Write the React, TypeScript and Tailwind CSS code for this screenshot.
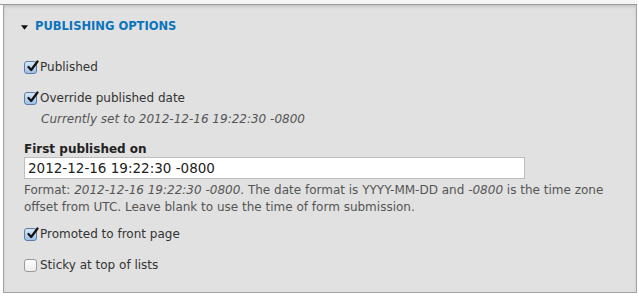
import React from 'react';

const font = { fontFamily: '"DejaVu Sans", Verdana, sans-serif' };

const Check = ({ checked }: { checked: boolean }) => (
  <span
    className={`relative inline-flex w-[13px] h-[13px] shrink-0 rounded-[3px] border ${
      checked ? 'border-[#5a7ea8] bg-gradient-to-b from-[#d6e6f7] to-[#9fc0e6]' : 'border-[#9a9a9a] bg-gradient-to-b from-white to-[#ececec]'
    }`}
  >
    {checked && (
      <svg viewBox="0 0 13 13" className="absolute left-[1px] -top-[2px] w-[13px] h-[13px]">
        <path d="M2.5 7 L5.2 10 L11.5 1.5" fill="none" stroke="#111" strokeWidth="2.2" strokeLinecap="round" strokeLinejoin="round" />
      </svg>
    )}
  </span>
);

const CheckRow = ({ label, checked }: { label: string; checked: boolean }) => (
  <label className="flex items-center gap-[3px] h-[16px] text-[12px] text-[#333]">
    <Check checked={checked} />
    <span>{label}</span>
  </label>
);

export default function App() {
  return (
    <div className="w-[639px] h-[296px] bg-white" style={font}>
      <div className="w-[637px] h-[5px] bg-[#f4f4f4] border-b border-[#9a9a9a]" />
      <div className="ml-[3px] w-[634px] h-[288px] bg-[#e1e1e1] border-l border-r border-b border-[#a3a3a3] shadow-[inset_0_2px_3px_rgba(0,0,0,0.12)] px-[20px] pt-[14px]">
        <div className="flex items-center gap-[7px] h-[16px] text-[11.5px] font-bold text-[#0a74bd]">
          <svg viewBox="0 0 8 5" className="w-[7px] h-[5px] ml-[-3px]">
            <path d="M0 0 L8 0 L4 5 Z" fill="#111" />
          </svg>
          <span>PUBLISHING OPTIONS</span>
        </div>

        <div className="mt-[24px] flex flex-col">
          <CheckRow label="Published" checked />
          <div className="mt-[15px]">
            <CheckRow label="Override published date" checked />
            <div className="ml-[17px] mt-[4px] text-[12px] italic text-[#555]">
              Currently set to 2012-12-16 19:22:30 -0800
            </div>
          </div>

          <div className="mt-[13px]">
            <div className="text-[12px] font-bold text-[#222] leading-[16px]">First published on</div>
            <div className="w-[501px] h-[22px] bg-white border border-[#bdbdbd] flex items-center px-[3px] text-[13.5px] text-[#222]">
              2012-12-16 19:22:30 -0800
            </div>
            <div className="mt-[3px] text-[12px] leading-[17px] text-[#555] w-[598px]">
              Format: <em>2012-12-16 19:22:30 -0800</em>. The date format is YYYY-MM-DD and <em>-0800</em> is the time zone offset from UTC. Leave blank to use the time of form submission.
            </div>
          </div>

          <div className="mt-[10px]">
            <CheckRow label="Promoted to front page" checked />
          </div>
          <div className="mt-[15px]">
            <CheckRow label="Sticky at top of lists" checked={false} />
          </div>
        </div>
      </div>
    </div>
  );
}
